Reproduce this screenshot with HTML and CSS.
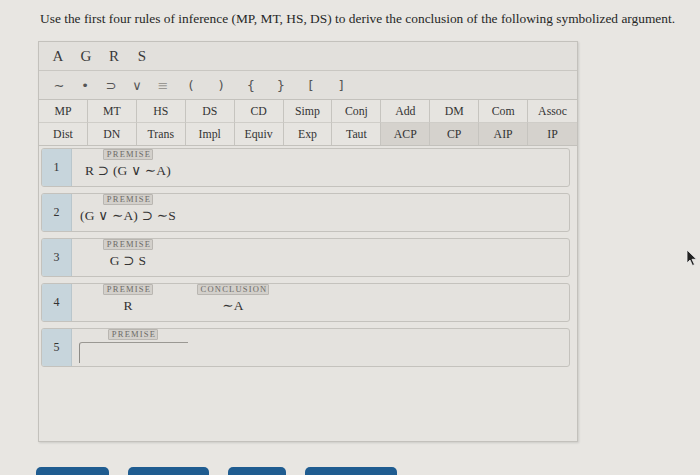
FILE: index.html
```html
<!DOCTYPE html>
<html>
<head>
<meta charset="utf-8">
<link rel="stylesheet" href="styles.css">
</head>
<body>
<p class="prompt">Use the first four rules of inference (MP, MT, HS, DS) to derive the conclusion of the following symbolized argument.</p>
<div class="panel">
  <div class="letters">
    <span>A</span><span>G</span><span>R</span><span>S</span>
  </div>
  <div class="symbols">
    <span class="op">∼</span><span class="op">•</span><span class="op">⊃</span><span class="op">∨</span><span class="op">≡</span>
    <span class="br">(</span><span class="br">)</span><span class="br">{</span><span class="br">}</span><span class="br">[</span><span class="br">]</span>
  </div>
  <div class="rules">
    <div>MP</div><div>MT</div><div>HS</div><div>DS</div><div>CD</div><div>Simp</div><div>Conj</div><div>Add</div><div>DM</div><div>Com</div><div>Assoc</div>
    <div>Dist</div><div>DN</div><div>Trans</div><div>Impl</div><div>Equiv</div><div>Exp</div><div>Taut</div><div class="dark">ACP</div><div class="dark">CP</div><div class="dark">AIP</div><div class="dark">IP</div>
  </div>
  <div class="lines">
    <div class="line">
      <div class="num">1</div>
      <div class="body">
        <div class="cell"><span class="tag">PREMISE</span><span class="formula">R ⊃ (G ∨ ∼A)</span></div>
      </div>
    </div>
    <div class="line">
      <div class="num">2</div>
      <div class="body">
        <div class="cell"><span class="tag">PREMISE</span><span class="formula">(G ∨ ∼A) ⊃ ∼S</span></div>
      </div>
    </div>
    <div class="line">
      <div class="num">3</div>
      <div class="body">
        <div class="cell"><span class="tag">PREMISE</span><span class="formula">G ⊃ S</span></div>
      </div>
    </div>
    <div class="line">
      <div class="num">4</div>
      <div class="body">
        <div class="cell"><span class="tag">PREMISE</span><span class="formula">R</span></div>
        <div class="cell"><span class="tag">CONCLUSION</span><span class="formula">∼A</span></div>
      </div>
    </div>
    <div class="line">
      <div class="num">5</div>
      <div class="body">
        <div class="cell cell-input"><span class="tag">PREMISE</span><span class="input"></span></div>
      </div>
    </div>
  </div>
</div>
<div class="buttons">
  <span class="btn b1"></span><span class="btn b2"></span><span class="btn b3"></span><span class="btn b4"></span>
</div>
<svg class="cursor" width="12" height="18" viewBox="0 0 12 18"><path d="M1 1 L1 14 L4 11 L6.5 16.5 L8.5 15.6 L6 10.3 L10.5 10.3 Z" fill="#222" stroke="#eee" stroke-width="0.8"/></svg>
</body>
</html>
```
FILE: styles.css
```css
html, body {
  margin: 0;
  padding: 0;
  overflow: hidden;
}
body {
  background: #e8e6e2;
  font-family: "Liberation Serif", "DejaVu Serif", serif;
  color: #2b2b2b;
  width: 700px;
  height: 475px;
  position: relative;
}
.prompt {
  margin: 0;
  padding: 11px 0 0 40px;
  font-size: 13.4px;
  line-height: 15px;
  color: #262626;
  white-space: nowrap;
}
.panel {
  margin: 15px 0 0 38px;
  width: 538px;
  height: 399px;
  border: 1px solid #c3c1bc;
  background: #e6e4e0;
  box-shadow: 1px 1px 2px rgba(0,0,0,0.12);
  display: flex;
  flex-direction: column;
}
.letters {
  height: 28px;
  display: flex;
  align-items: center;
  padding-left: 5px;
  border-bottom: 1px solid #c9c7c2;
  background: #e2e0dc;
}
.letters span {
  width: 28px;
  text-align: center;
  font-size: 15px;
  color: #3a3a3a;
}
.symbols {
  height: 28px;
  display: flex;
  align-items: center;
  padding-left: 7px;
  border-bottom: 1px solid #c3c1bc;
  background: #e2e0dc;
  color: #555;
}
.symbols .op {
  width: 26px;
  text-align: center;
  font-size: 13px;
  font-family: "DejaVu Sans", sans-serif;
}
.symbols .op:nth-child(5) {
  color: #9a9893;
}
.symbols .br {
  width: 30px;
  text-align: center;
  font-size: 13px;
  font-family: "DejaVu Sans", sans-serif;
}
.rules {
  display: grid;
  grid-template-columns: repeat(11, 1fr);
  border-bottom: 1px solid #c3c1bc;
}
.rules div {
  height: 22px;
  line-height: 22px;
  text-align: center;
  font-size: 11.8px;
  color: #333;
  background: #e6e4e0;
  border-right: 1px solid #c6c4bf;
  border-bottom: 1px solid #cfcdc8;
}
.rules div:nth-child(11n) {
  border-right: none;
}
.rules div:nth-child(n+12) {
  border-bottom: none;
}
.rules div.dark {
  background: #d5d2cd;
}
.lines {
  display: flex;
  flex-direction: column;
  gap: 6px;
  padding: 2px 7px 0 2px;
}
.line {
  height: 37px;
  display: flex;
  border: 1px solid #c4c2bd;
  border-radius: 3px;
  background: #e4e2de;
  overflow: hidden;
}
.num {
  width: 29px;
  background: #c7d5dc;
  border-right: 1px solid #b9c6cc;
  display: flex;
  align-items: center;
  justify-content: center;
  font-size: 12px;
  color: #333;
}
.body {
  display: flex;
  gap: 5px;
  padding: 0 0 0 6px;
}
.cell {
  width: 100px;
  display: flex;
  flex-direction: column;
  align-items: center;
}
.cell-input {
  width: 110px;
}
.tag {
  font-size: 8.5px;
  line-height: 9px;
  letter-spacing: 1.2px;
  padding: 0 1px 0 3px;
  color: #6d6b67;
  background: #d3d0cb;
  border: 1px solid #b9b6b1;
  border-radius: 1px;
}
.formula {
  margin-top: 3px;
  font-size: 13.5px;
  line-height: 16px;
  color: #333;
  letter-spacing: 0.2px;
  white-space: nowrap;
}
.input {
  margin-top: 2px;
  width: 108px;
  height: 20px;
  border-top: 1px solid #9a9893;
  border-left: 1px solid #8d8b86;
  border-radius: 3px 0 0 0;
}
.buttons {
  display: flex;
  gap: 19px;
  padding: 25px 0 0 36px;
}
.btn {
  height: 30px;
  background: #1f5c90;
  border-radius: 5px;
}
.b1 { width: 73px; }
.b2 { width: 81px; }
.b3 { width: 58px; }
.b4 { width: 92px; }
.cursor {
  position: absolute;
  left: 686px;
  top: 249px;
}
```
